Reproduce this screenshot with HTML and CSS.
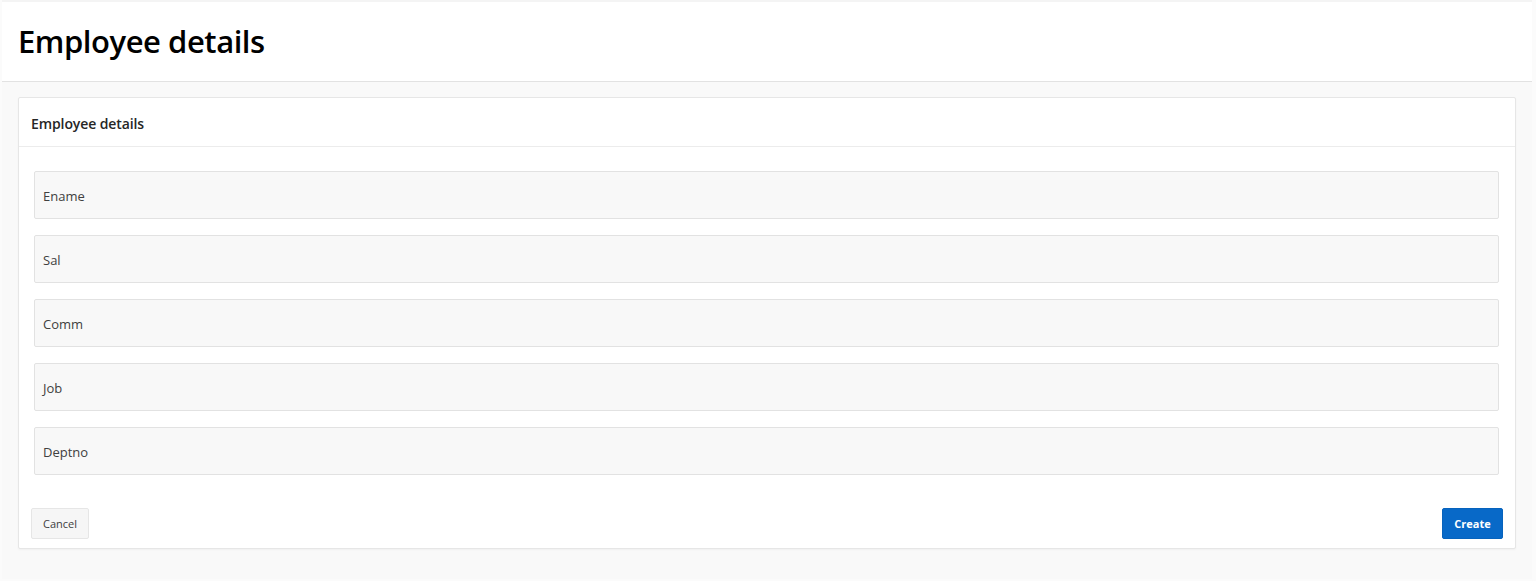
FILE: index.html
```html
<!DOCTYPE html>
<html lang="en">
<head>
<meta charset="utf-8">
<title>Employee details</title>
<link rel="stylesheet" href="styles.css">
</head>
<body>
<div class="page">
  <header class="page-header">
    <h1 class="page-title">Employee details</h1>
  </header>
  <main class="page-body">
    <section class="region">
      <div class="region-header">
        <h2 class="region-title">Employee details</h2>
      </div>
      <div class="region-body">
        <div class="field"><span class="field-label">Ename</span></div>
        <div class="field"><span class="field-label">Sal</span></div>
        <div class="field"><span class="field-label">Comm</span></div>
        <div class="field"><span class="field-label">Job</span></div>
        <div class="field"><span class="field-label">Deptno</span></div>
      </div>
      <div class="region-buttons">
        <button class="btn btn-cancel" type="button">Cancel</button>
        <button class="btn btn-create" type="button">Create</button>
      </div>
    </section>
  </main>
</div>
</body>
</html>
```

FILE: styles.css
```css
* { box-sizing: border-box; }
html, body { margin: 0; padding: 0; }
body {
  background: #fbfbfb;
  font-family: "Open Sans", "Noto Sans", "Liberation Sans", sans-serif;
  color: #262626;
  height: 581px;
}
.page {
  margin: 0 4px 0 2px;
  border-top: 2px solid #f4f4f4;
  background: #f9f9f9;
  min-height: 579px;
}
.page-header {
  background: #ffffff;
  height: 80px;
  border-bottom: 1px solid #e2e2e2;
  display: flex;
  align-items: center;
  padding-left: 16px;
}
.page-title {
  margin: 0;
  font-size: 31px;
  font-weight: 600;
  color: #000;
  letter-spacing: -0.45px;
  padding-bottom: 2px;
}
.page-body {
  padding: 15px 16px 0 16px;
}
.region {
  background: #fff;
  border: 1px solid #e6e6e6;
  border-radius: 2px;
  box-shadow: 0 1px 2px rgba(0,0,0,0.04);
}
.region-header {
  height: 49px;
  border-bottom: 1px solid #ececec;
  display: flex;
  align-items: center;
  padding-left: 12px;
}
.region-title {
  margin: 0;
  font-size: 14px;
  font-weight: 600;
  color: #262626;
  letter-spacing: -0.1px;
  padding-top: 2px;
}
.region-body {
  padding: 24px 16px 0 15px;
  display: flex;
  flex-direction: column;
  gap: 16px;
}
.field {
  height: 48px;
  background: #f8f8f8;
  border: 1px solid #e2e2e2;
  border-radius: 2px;
  display: flex;
  align-items: center;
  padding-left: 8px;
}
.field-label {
  font-size: 13px;
  color: #404040;
  padding-top: 2px;
}
.region-buttons {
  display: flex;
  justify-content: space-between;
  align-items: center;
  padding: 33px 12px 9px 12px;
}
.btn {
  height: 31px;
  font-family: inherit;
  font-size: 11px;
  border-radius: 2px;
  padding: 0 10px;
  cursor: pointer;
}
.btn-cancel {
  background: #f6f6f6;
  border: 1px solid #e6e6e6;
  color: #404040;
  width: 58px;
}
.btn-create {
  background: #0869c8;
  border: 1px solid #0763bd;
  color: #fff;
  font-weight: 700;
  width: 61px;
}
```
